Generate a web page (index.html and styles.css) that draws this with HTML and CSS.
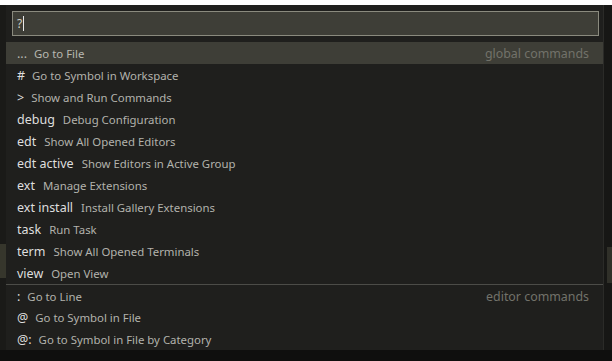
FILE: index.html
```html
<!DOCTYPE html>
<html lang="en">

<head>
    <meta charset="UTF-8">
    <title>Quick Open</title>
    <link rel="stylesheet" href="styles.css">
</head>

<body>
    <div class="topbar"></div>
    <div class="main">
        <div class="gutter"><span class="mark"></span></div>
        <div class="widget">
            <div class="inputbox">
                <span class="query">?</span><span class="caret"></span>
            </div>
            <ul class="list">
                <li class="row focused">
                    <span class="key sym">...</span><span class="desc">Go to File</span>
                    <span class="group">global commands</span>
                </li>
                <li class="row"><span class="key sym">#</span><span class="desc">Go to Symbol in Workspace</span></li>
                <li class="row"><span class="key sym">&gt;</span><span class="desc">Show and Run Commands</span></li>
                <li class="row"><span class="key">debug</span><span class="desc">Debug Configuration</span></li>
                <li class="row"><span class="key">edt</span><span class="desc">Show All Opened Editors</span></li>
                <li class="row"><span class="key">edt active</span><span class="desc">Show Editors in Active Group</span></li>
                <li class="row"><span class="key">ext</span><span class="desc">Manage Extensions</span></li>
                <li class="row"><span class="key">ext install</span><span class="desc">Install Gallery Extensions</span></li>
                <li class="row"><span class="key">task</span><span class="desc">Run Task</span></li>
                <li class="row"><span class="key">term</span><span class="desc">Show All Opened Terminals</span></li>
                <li class="row"><span class="key">view</span><span class="desc">Open View</span></li>
                <li class="row first">
                    <span class="key sym">:</span><span class="desc">Go to Line</span>
                    <span class="group">editor commands</span>
                </li>
                <li class="row"><span class="key sym">@</span><span class="desc">Go to Symbol in File</span></li>
                <li class="row"><span class="key sym">@:</span><span class="desc">Go to Symbol in File by Category</span></li>
            </ul>
        </div>
        <div class="side"><span class="thumb"></span></div>
    </div>
</body>

</html>
```

FILE: styles.css
```css
/*
    基本样式
*/
html,
body,
ul,
li {
    margin: 0;
    padding: 0;
}

ul,
li {
    list-style: none;
}

body {
    width: 612px;
    height: 361px;
    overflow: hidden;
    background-color: #0f0f0e;
    font-family: "Noto Sans", "Open Sans", sans-serif;
}

.topbar {
    height: 5px;
    background-color: #fff;
}

.main {
    display: flex;
    height: 345px;
}

/*
    两侧
*/
.gutter {
    width: 6px;
    background-color: #1a1a18;
    padding-top: 239px;
}

.gutter .mark {
    display: block;
    height: 34px;
    background-color: #36362c;
}

.side {
    width: 8px;
    background-color: #171715;
    border-left: 1px solid #2b2b28;
    padding-top: 242px;
}

.side .thumb {
    display: block;
    margin-left: 3px;
    height: 36px;
    background-color: #303029;
}

/*
    面板
*/
.widget {
    flex: 1;
    background-color: #1f1f1d;
    padding-top: 6px;
}

.inputbox {
    display: flex;
    align-items: center;
    height: 23px;
    margin: 0 4px 0 6px;
    padding-left: 4px;
    background-color: #3e3e37;
    border: 1px solid #8a8a7e;
}

.query {
    font-size: 12px;
    color: #cfcfc8;
}

.caret {
    width: 1px;
    height: 15px;
    margin-left: 1px;
    background-color: #e8e8e8;
}

.list {
    margin-top: 6px;
}

.row {
    display: flex;
    align-items: baseline;
    box-sizing: border-box;
    height: 22px;
    line-height: 21px;
    padding: 1px 14px 0 11px;
}

.row.focused {
    background-color: #3e3e37;
}

.row.first {
    border-top: 1px solid #4c4c48;
}

.key {
    font-size: 12.5px;
    color: #dedede;
    margin-right: 8px;
}

.key.sym {
    margin-right: 7px;
}

.desc {
    font-size: 11.4px;
    color: #b2b2ac;
}

.focused .key,
.focused .desc {
    color: #b8b8b0;
}

.group {
    margin-left: auto;
    font-size: 12.4px;
    color: #72726a;
}
```
